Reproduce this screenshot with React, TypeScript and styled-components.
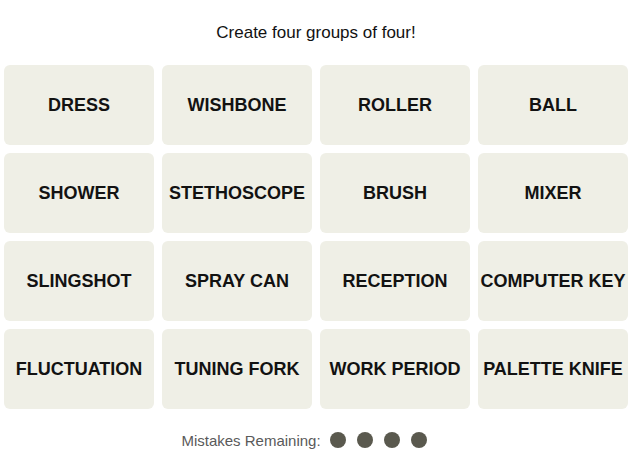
import * as React from 'react';
import styled, { createGlobalStyle } from 'styled-components';

const words = [
	'DRESS', 'WISHBONE', 'ROLLER', 'BALL',
	'SHOWER', 'STETHOSCOPE', 'BRUSH', 'MIXER',
	'SLINGSHOT', 'SPRAY CAN', 'RECEPTION', 'COMPUTER KEY',
	'FLUCTUATION', 'TUNING FORK', 'WORK PERIOD', 'PALETTE KNIFE',
];

const mistakesLeft = 4;

const App = () => {
	return (
		<Root>
			<GlobalStyle />
			<Title>Create four groups of four!</Title>
			<Board>
				{words.map(w => (
					<Tile key={w}>{w}</Tile>
				))}
			</Board>
			<Mistakes>
				<span>Mistakes Remaining:</span>
				<Dots>
					{Array.from({ length: mistakesLeft }).map((_, i) => (
						<Dot key={i} />
					))}
				</Dots>
			</Mistakes>
		</Root>
	);
};

export default App;

const GlobalStyle = createGlobalStyle`
	html, body {
		margin: 0;
		padding: 0;
		background: #ffffff;
	}
	body {
		font-family: 'Liberation Sans', Arial, sans-serif;
	}
`;

const Root = styled.div`
	width: 632px;
	display: flex;
	flex-direction: column;
	align-items: center;
	padding-top: 23px;
`;

const Title = styled.div`
	font-size: 17px;
	line-height: 20px;
	color: #121212;
	margin-bottom: 22px;
`;

const Board = styled.div`
	display: grid;
	grid-template-columns: repeat(4, 150px);
	grid-auto-rows: 80px;
	gap: 8px;
`;

const Tile = styled.div`
	display: flex;
	align-items: center;
	justify-content: center;
	background-color: #efefe6;
	border-radius: 6px;
	font-size: 18px;
	font-weight: 700;
	color: #121212;
	white-space: nowrap;
`;

const Mistakes = styled.div`
	display: flex;
	align-items: center;
	margin-top: 21px;
	height: 20px;
	font-size: 15px;
	color: #5a5a5a;
`;

const Dots = styled.div`
	display: flex;
	gap: 11px;
	width: 121px;
	margin-left: 9px;
`;

const Dot = styled.span`
	display: block;
	width: 16px;
	height: 16px;
	border-radius: 50%;
	background-color: #5a594e;
`;
